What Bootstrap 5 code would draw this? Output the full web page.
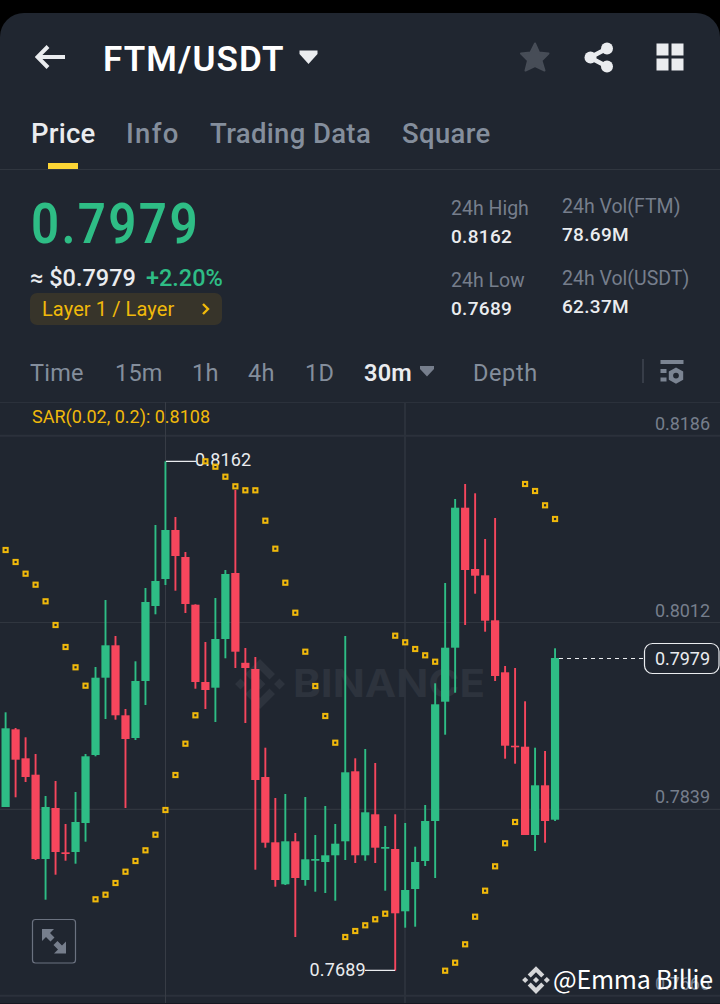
<!DOCTYPE html>
<html lang="en" data-bs-theme="dark">
<head>
<meta charset="utf-8">
<meta name="viewport" content="width=device-width, initial-scale=1">
<title>FTM/USDT</title>
<link href="https://cdn.jsdelivr.net/npm/bootstrap@5.3.0/dist/css/bootstrap.min.css" rel="stylesheet">
<style>
  :root { --panel:#202630; --line:#2b313b; --muted:#848e9c; --dim:#767e8c; --text:#eaecef; --up:#2ebd85; --down:#f6465d; --gold:#f0b90b; }
  body { background:#000; font-family:Roboto, "Noto Sans", sans-serif; color:var(--text); overflow:hidden; }
  .panel { background:var(--panel); margin-top:13px; height:991px; border-radius:24px 24px 0 0; overflow:hidden; }
  .topbar { height:88px; padding:0 36px 0 35px; }
  .pair { font-size:35px; font-weight:600; letter-spacing:1.1px; color:#fff; line-height:1; margin-left:37px; padding-top:5px; }
  .pair-caret { margin-left:14px; }
  .tabs { height:69px; border-bottom:1px solid #30363f; padding-left:31px; }
  .tabs .nav-link { padding:0; font-size:27.5px; font-weight:500; line-height:32px; margin-top:17px; letter-spacing:.35px; color:var(--muted); white-space:nowrap; }
  .tabs .nav-link.wide { letter-spacing:1.3px; }
  .tabs .nav-link.active { color:var(--text); letter-spacing:.2px; }
  .tabs .active::after { content:""; display:block; width:30px; height:6px; background:#fcd535; margin:13px 0 0 17px; }
  .summary { height:172px; padding:0 30px; }
  .last { font-size:56px; font-weight:600; line-height:60px; letter-spacing:2.7px; color:var(--up); margin-top:24px; transform:scaleX(.88); transform-origin:0 50%; padding-left:1px; }
  .fiat { font-size:23.5px; font-weight:500; line-height:28px; margin-top:10px; white-space:nowrap; }
  .fiat .change { color:var(--up); margin-left:10px; }
  .tag-pill { width:192px; height:32px; margin-top:1px; border-radius:7px; background:#37342a; color:var(--gold); font-size:20px; letter-spacing:.1px; padding:0 12px; }
  .stat-label { font-size:19.5px; line-height:24px; color:var(--dim); white-space:nowrap; }
  .stat-value { font-size:19px; line-height:24px; font-weight:500; letter-spacing:.3px; margin-top:4px; }
  .stat-gap { margin-top:20px; }
  .times { height:60px; padding:1px 0 0 30px; font-size:23.5px; letter-spacing:.2px; color:var(--muted); }
  .times span { white-space:nowrap; line-height:30px; }
  .split { width:2px; height:24px; background:#373d48; margin-top:-3px; }
  .times svg { margin-top:-3px; }
  .chart { display:block; font-family:Roboto, sans-serif; }
</style>
</head>
<body>
<main class="panel d-flex flex-column">
  <header class="topbar d-flex align-items-center flex-shrink-0">
    <svg width="31" height="24" viewBox="0 0 31 24"><path d="M2.500 12H30M13 1.500 2.500 12 13 22.500" fill="none" stroke="#eaecef" stroke-width="4"/></svg>
    <h1 class="pair mb-0">FTM/USDT</h1>
    <svg class="pair-caret" width="19" height="15" viewBox="0 0 19 15"><path d="M.5.5h18V4L9.500 14 .5 4z" fill="#eaecef"/></svg>
    <div class="d-flex align-items-center ms-auto">
      <svg width="32" height="32" viewBox="0 0 32 32"><path d="m16 2.500 4 9 9.500 1-7 7 3 10L16 25.200l-9.500 4.300 2.500-10-7-7 9.500-1z" fill="#474d57" stroke="#474d57" stroke-width="2" stroke-linejoin="round"/></svg>
      <svg width="30" height="31" viewBox="0 0 30 31" style="margin-left:33px"><path d="M23 6.500 6 15.500l17 9" fill="none" stroke="#eaecef" stroke-width="4.500"/><circle cx="6.500" cy="15.500" r="6" fill="#eaecef"/><circle cx="23" cy="6.500" r="6" fill="#eaecef"/><circle cx="23" cy="24.500" r="6" fill="#eaecef"/></svg>
      <svg width="28" height="28" viewBox="0 0 28 28" style="margin-left:42px"><path d="M.5.5h12v12H.5zM15.500.5h12v12h-12zM.5 15.500h12v12H.5zM15.500 15.500h12v12h-12z" fill="#eaecef"/></svg>
    </div>
  </header>

  <nav class="nav tabs flex-nowrap align-items-start flex-shrink-0">
    <a class="nav-link active" style="width:95px">Price</a>
    <a class="nav-link wide" style="width:84px">Info</a>
    <a class="nav-link" style="width:192px">Trading Data</a>
    <a class="nav-link">Square</a>
  </nav>

  <section class="summary d-flex flex-shrink-0">
    <div style="width:421px">
      <div class="last">0.7979</div>
      <div class="fiat"><span>≈ $0.7979</span><span class="change">+2.20%</span></div>
      <div class="tag-pill d-flex align-items-center justify-content-between">
        <span>Layer 1 / Layer</span>
        <svg width="9" height="12" viewBox="0 0 9 12"><path d="m2 1 5 5-5 5" fill="none" stroke="#f0b90b" stroke-width="2.400"/></svg>
      </div>
    </div>
    <div style="width:111px;padding-top:27px">
      <div class="stat-label">24h High</div><div class="stat-value">0.8162</div>
      <div class="stat-label stat-gap">24h Low</div><div class="stat-value">0.7689</div>
    </div>
    <div style="padding-top:25px">
      <div class="stat-label">24h Vol(FTM)</div><div class="stat-value">78.69M</div>
      <div class="stat-label stat-gap">24h Vol(USDT)</div><div class="stat-value">62.37M</div>
    </div>
  </section>

  <nav class="times d-flex align-items-center flex-shrink-0">
    <span style="width:85px">Time</span><span style="width:77px">15m</span><span style="width:56px">1h</span><span style="width:57px">4h</span><span style="width:59px">1D</span>
    <span style="width:56px;color:var(--text);font-weight:600">30m</span>
    <svg width="14" height="11" viewBox="0 0 14 11"><path d="M0 0h14v3L7 10.500 0 3z" fill="#767e8c"/></svg>
    <span style="margin-left:39px;width:169px;letter-spacing:.6px">Depth</span>
    <div class="split"></div>
    <svg width="24" height="25" viewBox="0 0 24 25" style="margin-left:16px"><path d="M.5 1h23v4H.5zM.5 10h6v4h-6zM.5 18.500h6v4h-6z" fill="#7b8492"/><path d="m16 8.500 7.200 4v8.200L16 24.700l-7.200-4v-8.200zm0 5.200a2.900 2.900 0 1 0 0 5.800 2.900 2.900 0 0 0 0-5.800z" fill="#7b8492" fill-rule="evenodd"/></svg>
  </nav>

  <svg class="chart flex-shrink-0" width="720" height="602" viewBox="0 402 720 602">
    <g stroke="#2b313b" stroke-width="2">
      <path d="M0 402H720M0 435.700H720M0 995.800H720M405 402V1004"/>
      <path d="M0 622.500H720M0 809.300H720" stroke="#30363f" stroke-width="1.200"/>
      <path d="M165.500 402V1004" stroke="#373c45" stroke-width="1"/>
      <path d="M0 1003.500H720" stroke="#161821" stroke-width="1"/>
    </g>
    <g fill="#2d333d">
      <path d="m260 659 15 15-5.500 5.500-9.500-9.500-9.500 9.500-5.500-5.500zM260 709l-15-15 5.500-5.500 9.500 9.500 9.500-9.500 5.500 5.500zM235 684l5.500-5.500 5.500 5.500-5.500 5.500zM274 684l5.500-5.500 5.500 5.500-5.500 5.500zM254.500 684l5.500-5.500 5.500 5.500-5.500 5.500z"/>
      <text x="293" y="697" font-family="Inter, sans-serif" font-weight="700" font-size="38.500" textLength="192" lengthAdjust="spacingAndGlyphs">BINANCE</text>
    </g>
    <g id="candles"></g>
    <path d="M166 461.300H196M365 970.300H395" stroke="#eaecef" stroke-width="1.200"/>
    <g fill="#eaecef" font-size="18">
      <text x="195" y="466" textLength="56">0.8162</text>
      <text x="309.500" y="976" textLength="56">0.7689</text>
    </g>
    <g id="sar" fill="none" stroke="#f0b90b" stroke-width="2"></g>
    <text x="32" y="423" fill="#f0b90b" font-size="18" textLength="178">SAR(0.02, 0.2): 0.8108</text>
    <g fill="#767e8c" font-size="18">
      <text x="655" y="430" textLength="55">0.8186</text>
      <text x="655" y="617" textLength="55">0.8012</text>
      <text x="655" y="803" textLength="55">0.7839</text>
      <text x="655" y="990" textLength="55">0.7665</text>
    </g>
    <path d="M559 658.500H644" stroke="#eaecef" stroke-width="1.200" stroke-dasharray="4 4"/>
    <rect x="644.500" y="643.500" width="74.500" height="30" rx="8" fill="#202630" stroke="#eaecef" stroke-width="1.200"/>
    <text x="655" y="665" fill="#eaecef" font-size="18" textLength="55">0.7979</text>
    <rect x="32.500" y="919.500" width="43" height="43.500" rx="3" fill="none" stroke="#6b7280" stroke-width="1.200"/>
    <path d="M42 929h12l-4 4 4.500 4.500-4 4-4.500-4.500-4 4zM66 953.500H54l4-4-4.500-4.500 4-4 4.500 4.500 4-4z" fill="#767e8c"/>
    <path transform="translate(536 980) scale(.555) translate(-260 -684)" fill="#d4d5d7" d="m260 659 15 15-5.500 5.500-9.500-9.500-9.500 9.500-5.500-5.500zM260 709l-15-15 5.500-5.500 9.500 9.500 9.500-9.500 5.500 5.500zM235 684l5.500-5.500 5.500 5.500-5.500 5.500zM274 684l5.500-5.500 5.500 5.500-5.500 5.500zM254.500 684l5.500-5.500 5.500 5.500-5.500 5.500z"/>
    <text x="553" y="989" fill="#fff" font-family="Noto Sans CJK SC, sans-serif" font-size="25" font-weight="400" textLength="160">@Emma Billie</text>
  </svg>
</main>
<script src="https://cdn.jsdelivr.net/npm/bootstrap@5.3.0/dist/js/bootstrap.bundle.min.js"></script>
<script>
  // direction, high, body top, body bottom, low
  const candles = [
    ['u',712.3,728.3,807,807],['d',728,729.3,759.7,797.3],['d',737.3,758.3,777,782],['d',754,774.7,859,860],
    ['u',796,807,859,899.7],['d',781,808,852,874.7],['d',824,852.3,854,860.7],['u',792,822,852,863.7],
    ['u',754,756.3,823,841.7],['u',667,677.7,755,756.3],['u',600,645.3,677.7,719],['d',636,645.3,715.3,719.7],
    ['d',709,715.3,739,808],['u',661.3,681,738,740],['u',588,602,681,705],['u',525,581,606,614.3],
    ['u',461.3,530,579,585],['d',517,530,556,590.7],['d',552,557,604,613],['d',604.3,604.7,682,688.7],
    ['d',642,682,690,709],['u',598,639,687.7,722],['u',570,574,639,658.3],['d',490,573,651.7,668],
    ['d',648,662.8,668,723],['d',657,669,780,869.7],['d',747.7,777,842.7,847.7],['d',798,842.3,880,886.7],
    ['u',794,841.3,884.3,885],['d',833,841.3,878,937],['u',797,859.3,880,885.7],['u',835,859,860.7,891.7],
    ['u',806,855.3,862,893],['u',824,843.7,855.3,900.7],['u',636,772.3,841.3,860],['d',758.3,771.3,855.3,863],
    ['u',749,812.3,855.3,860.7],['d',763,814.3,847.7,863],['u',826,847,848.7,890.7],['d',814.3,849,913.3,970.7],
    ['u',823,890,911.3,927.7],['u',846.7,862,889,926.7],['u',805,821,861,866],['u',683.3,704.3,821,878],
    ['u',583,647.7,701.7,734.7],['u',499,507.7,647.7,692.7],['d',484,507.7,570,625],['d',493.3,569,575.7,593.7],
    ['d',539,575.3,620.7,631.7],['d',518,620.3,676,681],['d',666,672.3,745.7,758.7],['d',668,745.7,747.3,763.7],
    ['d',701.3,746.7,835,835],['u',747.7,785.3,835,851],['d',751,785.3,821,842.7],['u',648.3,658,819.7,821]
  ];
  const sar = [550,562,573.7,584.7,601.3,625,647,667.3,685.7,899.3,894.7,883,871.7,861,850.3,834.7,810,775,743.7,715.3,
    461.3,466.7,476.7,486.3,490.3,490.3,520.7,548.7,582.7,612.7,651.7,686,716,742.7,937,931,925.3,919.3,913.7,
    635.7,642.3,649,655.3,661.7,970.7,962.7,944.3,916.7,890.7,866.3,843.3,822,484,491,505.3,519];
  const x = i => 5.6 + 9.99 * i;
  document.getElementById('candles').innerHTML = candles.map(([d, h, t, b, l], i) => {
    const c = d === 'u' ? '#2ebd85' : '#f6465d';
    return `<g fill="${c}"><rect x="${x(i) - .95}" y="${h}" width="1.9" height="${l - h}"/><rect x="${x(i) - 4.1}" y="${t}" width="8.2" height="${b - t}"/></g>`;
  }).join('');
  document.getElementById('sar').innerHTML = sar.map((y, i) =>
    `<rect x="${x(i) - 2.1}" y="${y - 2.1}" width="4.2" height="4.2"/>`).join('');
</script>
</body>
</html>
